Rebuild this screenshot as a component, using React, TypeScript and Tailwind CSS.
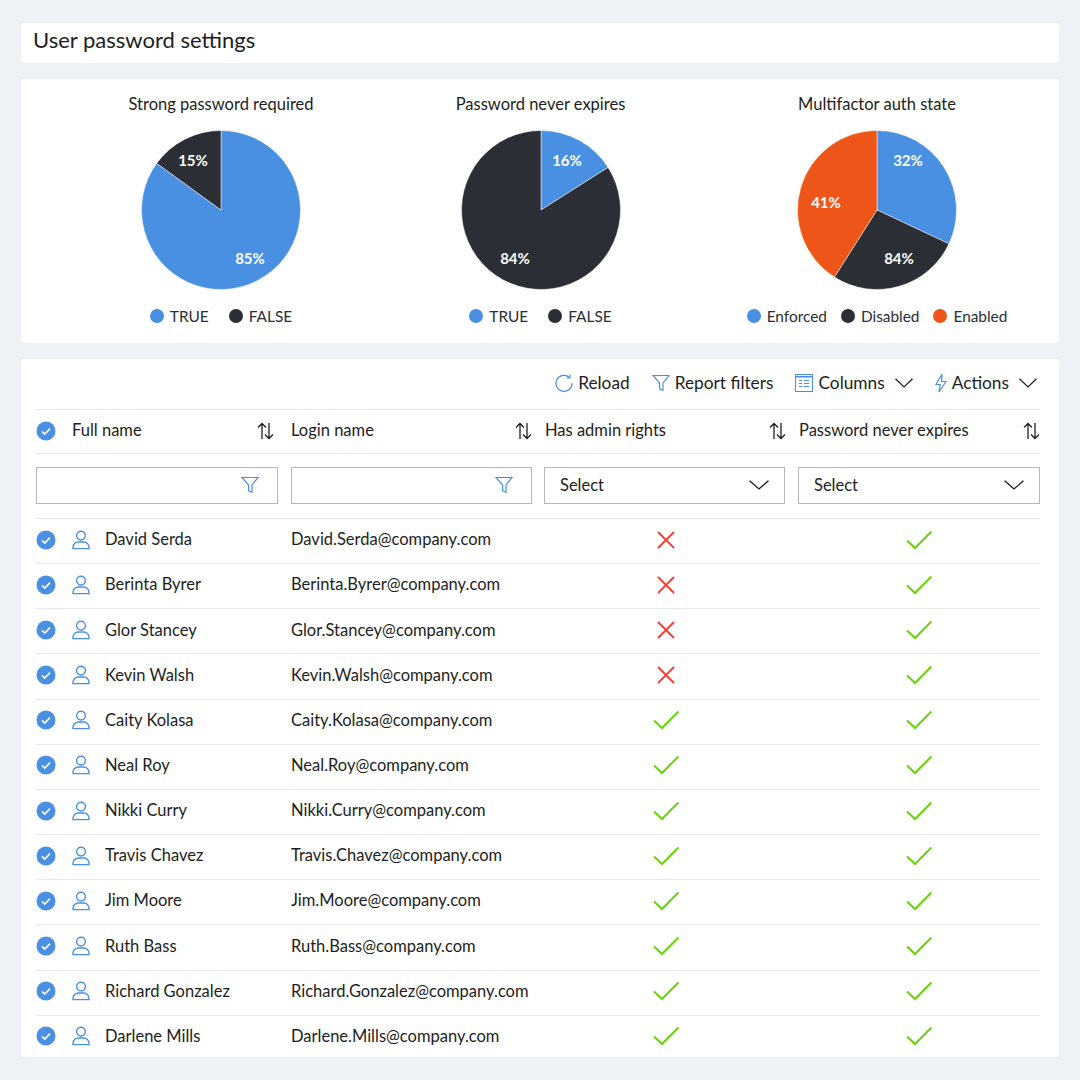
type Slice = { value: number; color: string; label: string; x: number; y: number };
type Chart = { title: string; slices: Slice[]; legend: string[] };

const BLUE = "#4a90e2";
const DARK = "#2b2e35";
const ORANGE = "#ee5619";

const charts: Chart[] = [
  {
    title: "Strong password required",
    legend: ["TRUE", "FALSE"],
    slices: [
      { value: 85, color: BLUE, label: "85%", x: 29, y: 49 },
      { value: 15, color: DARK, label: "15%", x: -28, y: -49 },
    ],
  },
  {
    title: "Password never expires",
    legend: ["TRUE", "FALSE"],
    slices: [
      { value: 16, color: BLUE, label: "16%", x: 26, y: -49 },
      { value: 84, color: DARK, label: "84%", x: -26, y: 49 },
    ],
  },
  {
    title: "Multifactor auth state",
    legend: ["Enforced", "Disabled", "Enabled"],
    slices: [
      { value: 32, color: BLUE, label: "32%", x: 31, y: -49 },
      { value: 27, color: DARK, label: "84%", x: 22, y: 49 },
      { value: 41, color: ORANGE, label: "41%", x: -51, y: -7 },
    ],
  },
];

const users: [string, boolean][] = [
  ["David Serda", false],
  ["Berinta Byrer", false],
  ["Glor Stancey", false],
  ["Kevin Walsh", false],
  ["Caity Kolasa", true],
  ["Neal Roy", true],
  ["Nikki Curry", true],
  ["Travis Chavez", true],
  ["Jim Moore", true],
  ["Ruth Bass", true],
  ["Richard Gonzalez", true],
  ["Darlene Mills", true],
];

function Pie({ slices }: { slices: Slice[] }) {
  const r = 79.5;
  let acc = 0;
  return (
    <svg width="160" height="160" viewBox="-80 -80 160 160">
      {slices.map((s) => {
        const a0 = (acc / 100) * Math.PI * 2;
        acc += s.value;
        const a1 = (acc / 100) * Math.PI * 2;
        const large = s.value > 50 ? 1 : 0;
        const d = `M0 0L${r * Math.sin(a0)} ${-r * Math.cos(a0)}A${r} ${r} 0 ${large} 1 ${r * Math.sin(a1)} ${-r * Math.cos(a1)}Z`;
        return <path key={s.color} d={d} fill={s.color} stroke="#ffffff" strokeWidth="0.5" />;
      })}
      {slices.map((s) => (
        <text
          key={s.label + s.color}
          x={s.x}
          y={s.y}
          dy="5"
          textAnchor="middle"
          fill="#ffffff"
          className="text-[15px] font-bold"
        >
          {s.label}
        </text>
      ))}
    </svg>
  );
}

function PieCard({ chart }: { chart: Chart }) {
  const colors = [BLUE, DARK, ORANGE];
  return (
    <div className="flex flex-col items-center">
      <div className="h-[22px] text-[16.5px] leading-[22px] text-[#1c1e22]">{chart.title}</div>
      <div className="mt-[15px]">
        <Pie slices={chart.slices} />
      </div>
      <div className={`mt-[16px] flex items-center ${chart.legend.length > 2 ? "gap-[14px]" : "gap-[20px]"}`}>
        {chart.legend.map((l, i) => (
          <div key={l} className="flex items-center gap-[6px] text-[15.4px] leading-[20px] text-[#2b2e35]">
            <span className="h-[14px] w-[14px] rounded-full" style={{ backgroundColor: colors[i] }} />
            {l}
          </div>
        ))}
      </div>
    </div>
  );
}

function CheckDot() {
  return (
    <svg width="20" height="20" viewBox="0 0 20 20" className="shrink-0">
      <circle cx="10" cy="10" r="9.500" fill={BLUE} />
      <path d="M6 10.400l2.700 2.600L14 7.600" fill="none" stroke="#fff" strokeWidth="1.600" />
    </svg>
  );
}

function UserIcon() {
  return (
    <svg width="18" height="20" viewBox="0 0 18 20" fill="none" stroke={BLUE} strokeWidth="1.400" className="shrink-0">
      <circle cx="9" cy="5.600" r="4.400" />
      <path d="M1 18.600h16v-1.400c0-3.200-2.600-5.200-5.200-5.200H6.200C3.600 12 1 14 1 17.200z" />
    </svg>
  );
}

function Funnel({ size = 18 }: { size?: number }) {
  return (
    <svg width={size} height={size} viewBox="0 0 18 18" fill="none" stroke={BLUE} strokeWidth="1.200" className="shrink-0">
      <path d="M1 1.500h16L11 9v7.400l-3.400-1.600V9z" />
    </svg>
  );
}

function SortArrows() {
  return (
    <svg width="17" height="18" viewBox="0 0 17 18" fill="none" stroke="#1c1e22" strokeWidth="1.300" className="shrink-0">
      <path d="M5 17V1.500M1 5.500l4-4 4 4" />
      <path d="M12 1v15.500M8 12.500l4 4 4-4" />
    </svg>
  );
}

function Chevron({ width = 18 }: { width?: number }) {
  return (
    <svg width={width} height="10" viewBox="0 0 18 10" preserveAspectRatio="none" fill="none" stroke="#1c1e22" strokeWidth="1.200" className="shrink-0">
      <path d="M0.500 0.800L9 9l8.500-8.200" />
    </svg>
  );
}

function Cross() {
  return (
    <svg width="20" height="20" viewBox="0 0 20 20" fill="none" stroke="#fb3a2f" strokeWidth="1.800">
      <path d="M2 2l16 16M18 2L2 18" />
    </svg>
  );
}

function Tick() {
  return (
    <svg width="26" height="20" viewBox="0 0 26 20" fill="none" stroke="#66d40a" strokeWidth="2">
      <path d="M1 10.500l8 7.500L25.400 1.500" />
    </svg>
  );
}

function ColumnsIcon() {
  return (
    <svg width="18" height="18" viewBox="0 0 18 18" fill="none" stroke={BLUE} strokeWidth="1" className="shrink-0">
      <rect x="0.500" y="0.500" width="17" height="17" />
      <path d="M0.500 2.800h17" strokeWidth="1.500" />
      <path d="M4 6.500h3M4 9.500h3M4 12.500h3M9 6.500h5M9 9.500h5M9 12.500h5" />
    </svg>
  );
}

function Bolt() {
  return (
    <svg width="12" height="20" viewBox="0 0 12 20" fill="none" stroke={BLUE} strokeWidth="1.200" className="shrink-0">
      <path d="M7 1L1 11.500h4.200L4 19l7-10.500H6.600z" />
    </svg>
  );
}

function Reload() {
  return (
    <svg width="18" height="18" viewBox="0 0 18 18" fill="none" stroke={BLUE} strokeWidth="1.200" className="shrink-0">
      <path d="M14.500 3.500A8 8 0 1 0 17 9" />
      <path d="M15 0.500v3.500h-3.500" />
    </svg>
  );
}

export default function App() {
  const cols = "grid grid-cols-[255px_254px_254px_241px]";
  return (
    <div
      className="flex h-[1080px] w-[1080px] flex-col gap-[16px] overflow-hidden bg-[#eef1f6] px-[21px] pt-[23px] text-[#1c1e22]"
      style={{ fontFamily: '"Lato", "Noto Sans", sans-serif' }}
    >
      <div className="flex h-[40px] items-center rounded-[3px] bg-white px-[12px] pb-[8px] text-[22px]">User password settings</div>

      <div className="grid h-[264px] grid-cols-[320px_319px_354px] rounded-[3px] bg-white pl-[40px] pt-[14px]">
        {charts.map((c) => (
          <PieCard key={c.title} chart={c} />
        ))}
      </div>

      <div className="flex h-[698px] flex-col overflow-hidden rounded-[3px] bg-white pl-[15px] pr-[19px]">
        <div className="flex h-[50px] shrink-0 items-center justify-end gap-[22px] pb-[2px] pr-[3px] text-[17.3px]">
          <div className="flex items-center gap-[5px]"><Reload />Reload</div>
          <div className="flex items-center gap-[5px]"><Funnel />Report filters</div>
          <div className="flex items-center gap-[5px]">
            <ColumnsIcon />Columns
            <span className="ml-[5px]"><Chevron /></span>
          </div>
          <div className="flex items-center gap-[5px]">
            <Bolt />Actions
            <span className="ml-[5px]"><Chevron /></span>
          </div>
        </div>

        <div className={`${cols} h-[45px] shrink-0 items-center border-y border-[#e8e9eb] pb-[2px] text-[16.5px]`}>
          <div className="flex items-center pr-[17px]">
            <CheckDot />
            <span className="ml-[16px] flex-1">Full name</span>
            <SortArrows />
          </div>
          <div className="flex items-center pr-[13px]"><span className="flex-1">Login name</span><SortArrows /></div>
          <div className="flex items-center pr-[13px]"><span className="flex-1">Has admin rights</span><SortArrows /></div>
          <div className="flex items-center"><span className="flex-1">Password never expires</span><SortArrows /></div>
        </div>

        <div className={`${cols} h-[64px] shrink-0 items-center pb-[2px] text-[16.5px]`}>
          <div className="mr-[13px] flex h-[37px] items-center justify-end border border-[#b5b7ba] pr-[18px]"><Funnel /></div>
          <div className="mr-[13px] flex h-[37px] items-center justify-end border border-[#b5b7ba] pr-[18px]"><Funnel /></div>
          <div className="mr-[14px] -ml-px flex h-[37px] items-center justify-between border border-[#b5b7ba] px-[15px]">
            Select
            <Chevron width={20} />
          </div>
          <div className="-ml-px flex h-[37px] items-center justify-between border border-[#b5b7ba] px-[15px]">
            Select
            <Chevron width={20} />
          </div>
        </div>

        {users.map(([name, admin]) => (
          <div key={name} className={`${cols} h-[45.17px] shrink-0 items-center border-t border-[#e8e9eb] pb-[3px] text-[16.5px]`}>
            <div className="flex items-center">
              <CheckDot />
              <span className="ml-[16px]"><UserIcon /></span>
              <span className="ml-[15px]">{name}</span>
            </div>
            <div>{`${name.replace(" ", ".")}@company.com`}</div>
            <div className="flex justify-center pr-[13px]">{admin ? <Tick /> : <Cross />}</div>
            <div className="flex justify-center pr-[1px]"><Tick /></div>
          </div>
        ))}
      </div>
    </div>
  );
}
